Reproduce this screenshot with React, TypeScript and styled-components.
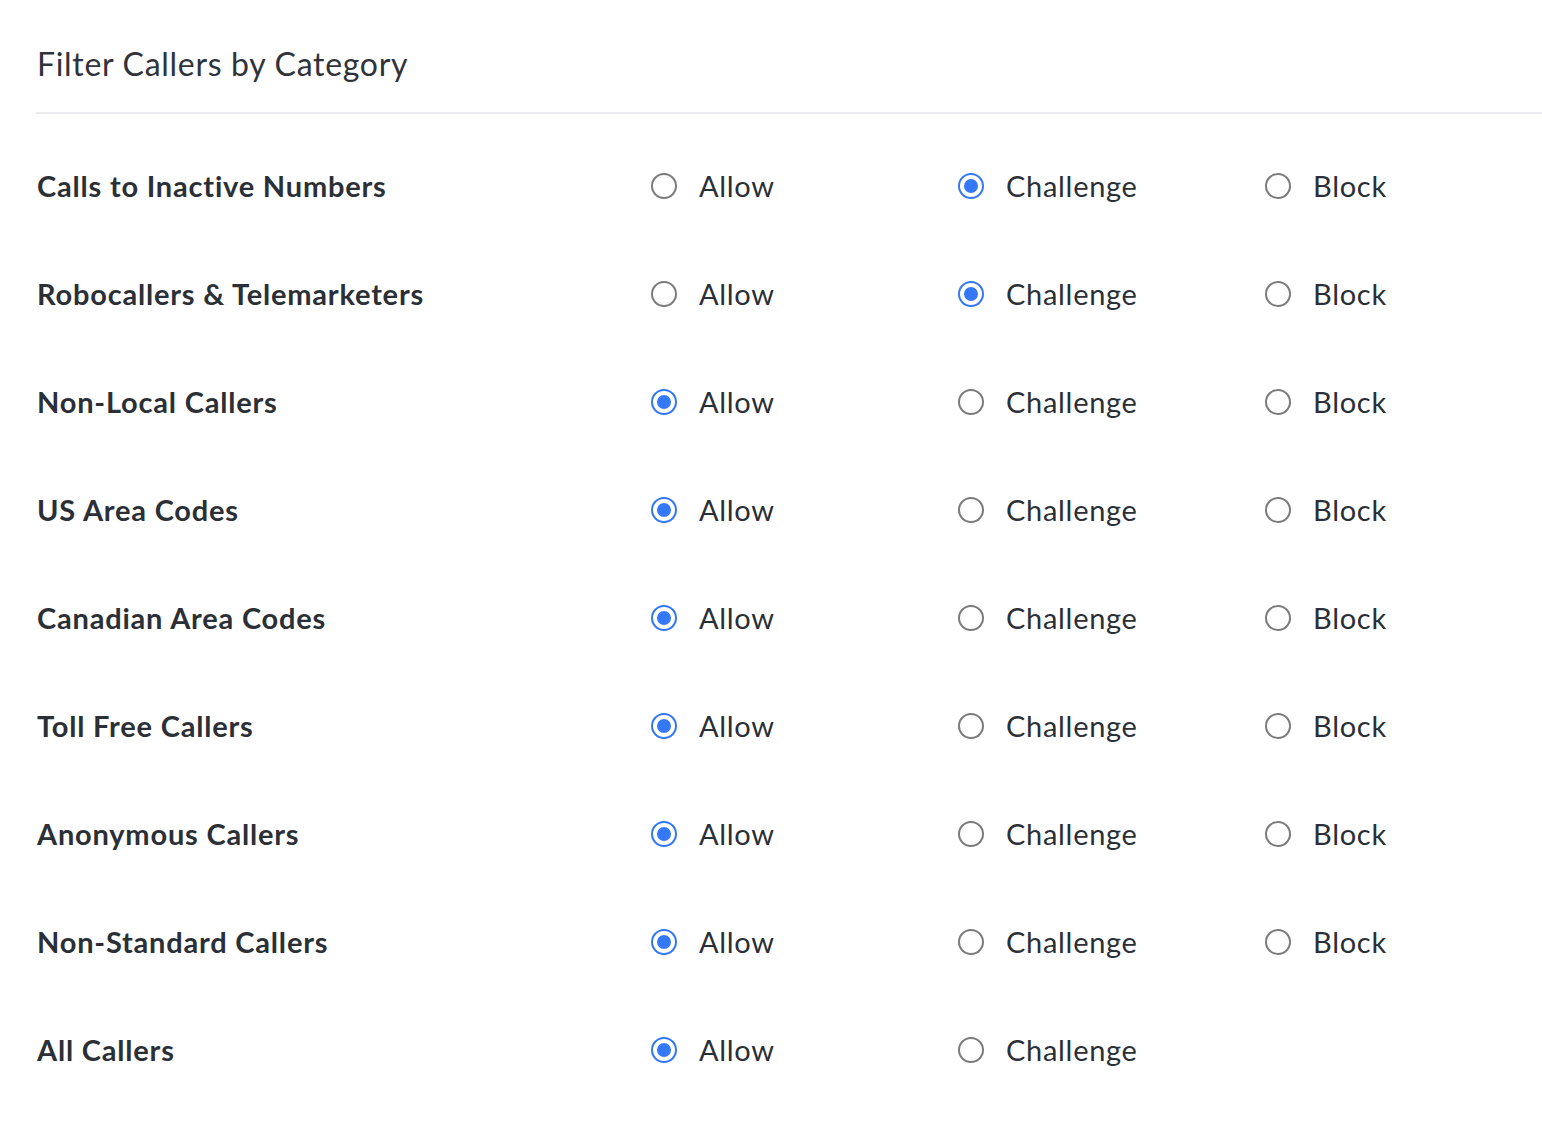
import React, { useState } from "react";
import styled, { createGlobalStyle } from "styled-components";

const GlobalStyle = createGlobalStyle`
  html, body { margin: 0; padding: 0; background: #ffffff; }
  body { font-family: Lato, "Open Sans", "Liberation Sans", sans-serif; color: #2b2f36; }
`;

const Page = styled.div`
  padding: 44px 0 40px 36px;
`;

const Title = styled.h2`
  margin: 0;
  font-size: 32px;
  line-height: 40px;
  font-weight: 400;
  letter-spacing: 0.7px;
  color: #2f333a;
  padding-left: 1px;
`;

const Divider = styled.hr`
  border: none;
  border-top: 2px solid #e9e9ee;
  margin: 28px 0 0 0;
`;

const List = styled.div`
  padding-top: 17px;
  padding-left: 1px;
`;

const Row = styled.div`
  display: grid;
  grid-template-columns: 614px 307px 307px 307px;
  align-items: center;
  height: 108px;
`;

const Label = styled.div`
  font-size: 29px;
  font-weight: 700;
  letter-spacing: 0.8px;
  color: #2b2f36;
`;

const Option = styled.label`
  display: flex;
  align-items: center;
  gap: 22px;
  cursor: pointer;
  font-size: 29px;
  font-weight: 400;
  letter-spacing: 0.7px;
  color: #2b2f36;
`;

const HiddenInput = styled.input`
  position: absolute;
  opacity: 0;
  width: 0;
  height: 0;
  margin: 0;
`;

const Circle = styled.span<{ $checked: boolean }>`
  box-sizing: border-box;
  width: 26px;
  height: 26px;
  margin-top: 2px;
  border-radius: 50%;
  border: 2px solid ${(p) => (p.$checked ? "#3478f6" : "#7b7b7b")};
  display: flex;
  align-items: center;
  justify-content: center;
  flex: none;
  &::after {
    content: "";
    width: 14px;
    height: 14px;
    border-radius: 50%;
    background: #3478f6;
    display: ${(p) => (p.$checked ? "block" : "none")};
  }
`;

type Choice = "Allow" | "Challenge" | "Block";

const categories: { name: string; value: Choice; options: Choice[] }[] = [
  { name: "Calls to Inactive Numbers", value: "Challenge", options: ["Allow", "Challenge", "Block"] },
  { name: "Robocallers & Telemarketers", value: "Challenge", options: ["Allow", "Challenge", "Block"] },
  { name: "Non-Local Callers", value: "Allow", options: ["Allow", "Challenge", "Block"] },
  { name: "US Area Codes", value: "Allow", options: ["Allow", "Challenge", "Block"] },
  { name: "Canadian Area Codes", value: "Allow", options: ["Allow", "Challenge", "Block"] },
  { name: "Toll Free Callers", value: "Allow", options: ["Allow", "Challenge", "Block"] },
  { name: "Anonymous Callers", value: "Allow", options: ["Allow", "Challenge", "Block"] },
  { name: "Non-Standard Callers", value: "Allow", options: ["Allow", "Challenge", "Block"] },
  { name: "All Callers", value: "Allow", options: ["Allow", "Challenge"] },
];

export default function App() {
  const [values, setValues] = useState<Choice[]>(categories.map((c) => c.value));
  return (
    <Page>
      <GlobalStyle />
      <Title>Filter Callers by Category</Title>
      <Divider />
      <List>
        {categories.map((cat, i) => (
          <Row key={cat.name}>
            <Label>{cat.name}</Label>
            {cat.options.map((opt) => {
              const checked = values[i] === opt;
              return (
                <Option key={opt}>
                  <HiddenInput
                    type="radio"
                    name={`cat-${i}`}
                    checked={checked}
                    onChange={() => setValues((v) => v.map((x, j) => (j === i ? opt : x)))}
                  />
                  <Circle $checked={checked} />
                  {opt}
                </Option>
              );
            })}
          </Row>
        ))}
      </List>
    </Page>
  );
}
